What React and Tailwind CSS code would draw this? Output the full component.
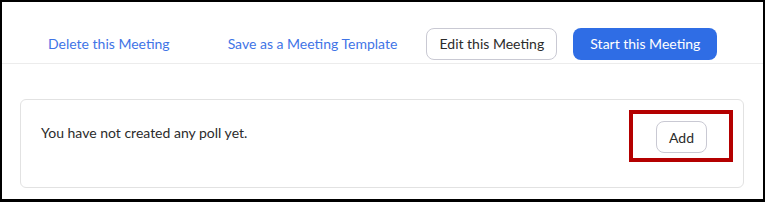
const App = () => {
  return (
    <div className="w-[766px] h-[202px] bg-white" style={{ fontFamily: 'Lato, "Open Sans", sans-serif' }}>
      <div className="w-[765px] h-[202px] border-2 border-b-[3px] border-black flex flex-col">
        <div className="h-[62px] flex items-center border-b border-[#ececec] pt-[26px] pb-[4px]">
          <a className="ml-[46px] text-[14px] text-[#3f74e6] leading-none">Delete this Meeting</a>
          <a className="ml-[58px] text-[14px] text-[#3f74e6] leading-none">Save as a Meeting Template</a>
          <button className="ml-[29px] w-[131px] h-[32px] rounded-[8px] border border-[#c9c9d3] text-[14px] text-[#2b2b2b] bg-white">
            Edit this Meeting
          </button>
          <button className="ml-[16px] w-[144px] h-[32px] rounded-[8px] bg-[#2f6de5] text-[14px] text-white">
            Start this Meeting
          </button>
        </div>
        <div className="pt-[35px] pl-[18px]">
          <div className="relative w-[724px] h-[89px] rounded-[6px] border border-[#e2e2e2] flex items-start justify-between pl-[20px] pr-[36px] pt-[21px]">
            <p className="text-[14px] text-[#2b2b2b] leading-[22px] pt-[1px]">You have not created any poll yet.</p>
            <button className="w-[51px] h-[32px] rounded-[8px] border border-[#c9c9d3] text-[14px] text-[#2b2b2b] bg-white">
              Add
            </button>
            <div className="absolute left-[608px] top-[10px] w-[104px] h-[52px] border-4 border-[#b40000]" />
          </div>
        </div>
      </div>
    </div>
  );
};

export default App;
